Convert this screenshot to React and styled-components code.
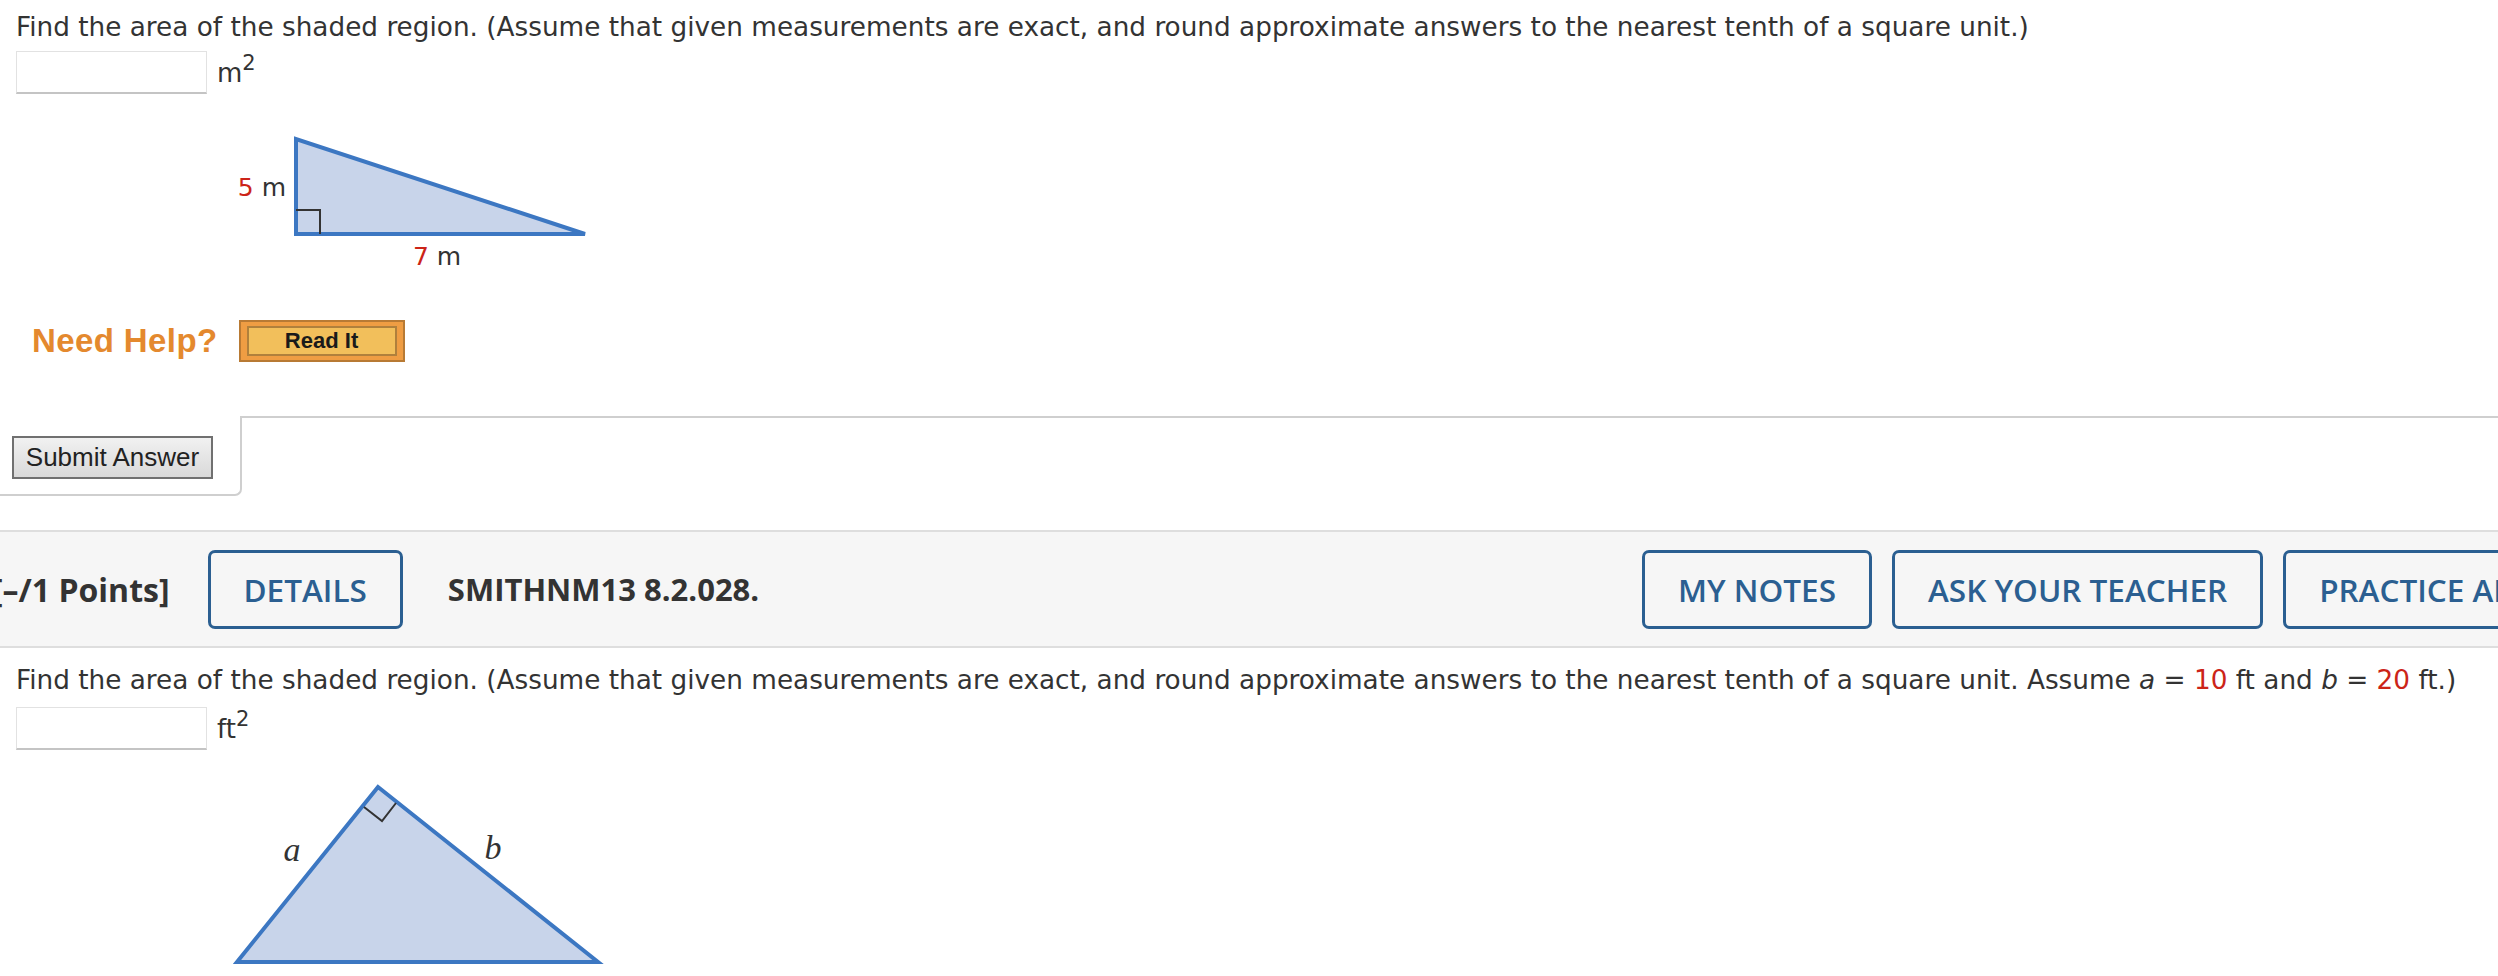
import React from 'react'
import styled, { createGlobalStyle } from 'styled-components'

const GlobalStyle = createGlobalStyle`
    html, body {
        margin: 0;
        padding: 0;
        background: #fff;
        overflow: hidden;
    }
    body {
        font-family: "DejaVu Sans", Verdana, sans-serif;
        color: #333;
    }
`

const RightTriangle = () => (
    <svg width="380" height="150" viewBox="0 0 380 150">
        <polygon points="66,9 66,104 355,104" fill="#c8d4ea" stroke="#3c77c2" strokeWidth="4" strokeLinejoin="miter" />
        <polyline points="66,80 90,80 90,104" fill="none" stroke="#333" strokeWidth="2" />
        <FigureLabel x="56" y="66" textAnchor="end"><RedTspan>5</RedTspan> m</FigureLabel>
        <FigureLabel x="183" y="135"><RedTspan>7</RedTspan> m</FigureLabel>
    </svg>
)

const TiltedTriangle = () => (
    <svg width="400" height="205" viewBox="0 0 400 205">
        <polygon points="158,12 17,187 378,187" fill="#c8d4ea" stroke="#3c77c2" strokeWidth="4" strokeLinejoin="miter" />
        <polyline points="144,32 162,46 176,28" fill="none" stroke="#333" strokeWidth="2" />
        <SideLabel x="72" y="86" textAnchor="middle">a</SideLabel>
        <SideLabel x="273" y="84" textAnchor="middle">b</SideLabel>
    </svg>
)

const HeaderButton = (props) => {
    return <OutlineButton>{props.title}</OutlineButton>
}

export default function App() {
    return (
        <Page>
            <GlobalStyle />
            <Question>
                <Prompt>
                    Find the area of the shaded region. (Assume that given measurements are exact, and round approximate answers to the nearest tenth of a square unit.)
                </Prompt>
                <AnswerRow>
                    <AnswerInput type="text" />
                    <Unit>m<sup>2</sup></Unit>
                </AnswerRow>
                <Figure top={36} left={214}>
                    <RightTriangle />
                </Figure>
                <HelpRow>
                    <HelpLabel>Need Help?</HelpLabel>
                    <ReadItButton><span>Read It</span></ReadItButton>
                </HelpRow>
            </Question>

            <SubmitSection>
                <SubmitTab>
                    <SubmitButton>Submit Answer</SubmitButton>
                </SubmitTab>
                <SubmitFill />
            </SubmitSection>

            <HeaderBar>
                <Points>[–/1 Points]</Points>
                <HeaderButton title="DETAILS" />
                <QuestionId>SMITHNM13 8.2.028.</QuestionId>
                <HeaderActions>
                    <HeaderButton title="MY NOTES" />
                    <HeaderButton title="ASK YOUR TEACHER" />
                    <HeaderButton title="PRACTICE ANOTHER" />
                </HeaderActions>
            </HeaderBar>

            <Question>
                <Prompt second>
                    Find the area of the shaded region. (Assume that given measurements are exact, and round approximate answers to the nearest tenth of a square unit. Assume <i>a</i> = <RedText>10</RedText> ft and <i>b</i> = <RedText>20</RedText> ft.)
                </Prompt>
                <AnswerRow second>
                    <AnswerInput type="text" />
                    <Unit>ft<sup>2</sup></Unit>
                </AnswerRow>
                <Figure top={25} left={204} tall>
                    <TiltedTriangle />
                </Figure>
            </Question>
        </Page>
    )
}

const Page = styled.div`
    width: 2498px;
    height: 976px;
    overflow: hidden;
`

const Question = styled.div`
    padding: 0 16px;
`

const Prompt = styled.div`
    font-size: 26.3px;
    line-height: 30px;
    padding-top: ${props => props.second ? '17px' : '12px'};
    white-space: nowrap;

    i {
        font-style: oblique;
    }
`

const RedText = styled.span`
    color: #cc2418;
`

const RedTspan = styled.tspan`
    fill: #cc2418;
`

const AnswerRow = styled.div`
    display: flex;
    align-items: flex-start;
    margin-top: ${props => props.second ? '12px' : '9px'};
`

const AnswerInput = styled.input`
    width: 191px;
    height: 43px;
    box-sizing: border-box;
    border: 1px solid #e2e2e2;
    border-bottom: 2px solid #c4c4c4;
    background: #fff;
    margin: 0;
`

const Unit = styled.span`
    font-size: 26px;
    line-height: 30px;
    margin-left: 10px;
    margin-top: 7px;

    sup {
        font-size: 21px;
        line-height: 0;
        position: relative;
        top: -2px;
    }
`

const Figure = styled.div`
    margin-top: ${props => props.top}px;
    margin-left: ${props => props.left}px;
    height: ${props => props.tall ? 205 : 145}px;

    svg {
        display: block;
    }
`

const FigureLabel = styled.text`
    font-family: "DejaVu Sans", Verdana, sans-serif;
    font-size: 25px;
    fill: #333;
`

const SideLabel = styled.text`
    font-family: "Liberation Serif", "Times New Roman", serif;
    font-style: italic;
    font-size: 34px;
    fill: #333;
`

const HelpRow = styled.div`
    display: flex;
    align-items: center;
    margin-top: 45px;
    padding-left: 16px;
    gap: 21px;
`

const HelpLabel = styled.span`
    font-family: "Liberation Sans", Arial, sans-serif;
    font-weight: bold;
    font-size: 33px;
    color: #e4892e;
    letter-spacing: 0.4px;
`

const ReadItButton = styled.button`
    width: 166px;
    height: 42px;
    box-sizing: border-box;
    padding: 4px 6px;
    border: 2px solid #b87a34;
    background: #ef9d43;
    display: flex;

    span {
        flex: 1;
        display: flex;
        align-items: center;
        justify-content: center;
        border: 2px solid #b0803c;
        background: #f2bf5b;
        font-family: "Liberation Sans", Arial, sans-serif;
        font-weight: bold;
        font-size: 22px;
        color: #1a1a1a;
    }
`

const SubmitSection = styled.div`
    display: flex;
    margin-top: 54px;
    height: 80px;
`

const SubmitTab = styled.div`
    width: 242px;
    box-sizing: border-box;
    border-right: 2px solid #cfcfcf;
    border-bottom: 2px solid #cfcfcf;
    border-bottom-right-radius: 7px;
    padding: 20px 0 0 12px;
`

const SubmitFill = styled.div`
    flex: 1;
    border-top: 2px solid #cfcfcf;
`

const SubmitButton = styled.button`
    width: 201px;
    height: 43px;
    box-sizing: border-box;
    border: 2px solid #707070;
    background: linear-gradient(#f1f1f1, #d9d9d9);
    font-family: "Liberation Sans", Arial, sans-serif;
    font-size: 26px;
    color: #222;
    padding: 0;
`

const HeaderBar = styled.div`
    display: flex;
    align-items: center;
    height: 118px;
    box-sizing: border-box;
    margin-top: 34px;
    margin-right: -176px;
    padding: 0 16px 0 0;
    background: #f6f6f6;
    border-top: 2px solid #dedede;
    border-bottom: 2px solid #dedede;
    font-family: "Open Sans", sans-serif;
`

const Points = styled.span`
    font-weight: 700;
    font-size: 32px;
    color: #333;
    margin-left: -8px;
    margin-right: 38px;
    white-space: nowrap;
`

const QuestionId = styled.span`
    font-weight: 700;
    font-size: 31px;
    color: #333;
    margin-left: 45px;
    white-space: nowrap;
`

const HeaderActions = styled.div`
    display: flex;
    gap: 20px;
    margin-left: auto;
`

const OutlineButton = styled.button`
    height: 79px;
    box-sizing: border-box;
    padding: 0 33px;
    border: 3px solid #2b5f91;
    border-radius: 7px;
    background: transparent;
    font-family: "Open Sans", sans-serif;
    font-weight: 600;
    font-size: 31.5px;
    color: #2b5f91;
    white-space: nowrap;
`
